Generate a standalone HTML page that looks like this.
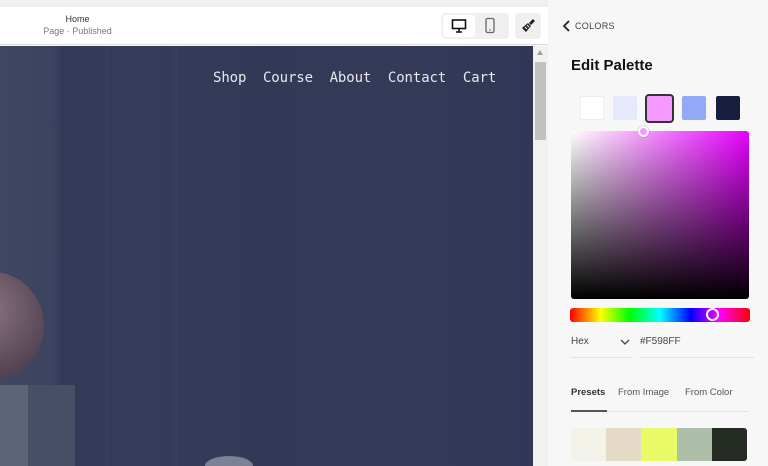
<!DOCTYPE html>
<html><head><meta charset="utf-8"><style>
*{margin:0;padding:0;box-sizing:border-box}
html,body{width:768px;height:466px;overflow:hidden}
body{background:#f7f7f7;font-family:"Liberation Sans",sans-serif;position:relative}
.abs{position:absolute}
</style></head><body>
<div class="abs" style="left:0;top:0;width:548px;height:7px;background:#efefef"></div>
<div class="abs" style="left:0;top:7px;width:548px;height:38px;background:#fff;border-bottom:1px solid #ddd"></div>
<div class="abs" style="left:0;top:14px;width:155px;text-align:center;font-size:9px;color:#333">Home</div>
<div class="abs" style="left:0;top:26px;width:155px;text-align:center;font-size:9px;color:#777">Page · Published</div>
<div class="abs" style="left:441px;top:13px;width:68px;height:26px;background:#f0f0f0;border-radius:4px"></div>
<div class="abs" style="left:443px;top:15px;width:32px;height:22px;background:#fff;border-radius:3px"></div>
<svg class="abs" style="left:451px;top:18px" width="16" height="16" viewBox="0 0 16 16"><rect x="1.5" y="2" width="13" height="8.5" fill="none" stroke="#111" stroke-width="1.6"/><path d="M8 10.5v3M5 14h6" stroke="#111" stroke-width="1.6"/></svg>
<svg class="abs" style="left:484px;top:17px" width="12" height="17" viewBox="0 0 12 17"><rect x="2" y="1.5" width="8" height="14" rx="1.5" fill="none" stroke="#666" stroke-width="1.3"/><path d="M5 13h2" stroke="#666"/></svg>
<div class="abs" style="left:515px;top:13px;width:26px;height:26px;background:#f0f0f0;border-radius:4px"></div>
<svg class="abs" style="left:519px;top:17px" width="18" height="18" viewBox="0 0 18 18"><path d="M14 2l2 2-4 4-2-2z" fill="#222"/><path d="M9 6l3 3-5 6-4-4z" fill="#222"/><path d="M6 10l2 2M8 8l2 2" stroke="#fff" stroke-width="1"/></svg>
<div class="abs" style="left:0;top:46px;width:533px;height:420px;overflow:hidden;background:linear-gradient(90deg,#3f4762 0%,#3b4360 10%,#333a57 12%,#353c5a 25%,#323957 50%,#343b58 70%,#313856 100%)">
<div class="abs" style="left:105px;top:0;width:4px;height:420px;background:rgba(255,255,255,.025)"></div>
<div class="abs" style="left:172px;top:0;width:6px;height:420px;background:rgba(255,255,255,.02)"></div>
<div class="abs" style="left:-60px;top:226px;width:104px;height:108px;border-radius:50%;background:radial-gradient(circle at 45% 35%,#8a7580,#5e4c5a 60%,#3e3646)"></div>
<div class="abs" style="left:0;top:339px;width:28px;height:81px;background:#5d6478"></div>
<div class="abs" style="left:28px;top:339px;width:47px;height:81px;background:#474e66"></div>
<div class="abs" style="left:205px;top:410px;width:48px;height:20px;border-radius:50%;background:#7c8196"></div>
<div class="abs" style="left:213px;top:24px;font-family:'DejaVu Sans Mono','Liberation Mono',monospace;font-size:14px;letter-spacing:-0.1px;color:#e8e8ee;white-space:nowrap">Shop&nbsp;&nbsp;Course&nbsp;&nbsp;About&nbsp;&nbsp;Contact&nbsp;&nbsp;Cart</div>
</div>
<div class="abs" style="left:533px;top:46px;width:15px;height:420px;background:#f1f1f1"></div>
<div class="abs" style="left:535px;top:62px;width:11px;height:78px;background:#c1c1c1"></div>
<div class="abs" style="left:537px;top:50px;width:0;height:0;border-left:3.5px solid transparent;border-right:3.5px solid transparent;border-bottom:5px solid #a0a0a0"></div>
<svg class="abs" style="left:562px;top:20px" width="10" height="12" viewBox="0 0 10 12"><path d="M7 1L2 6l5 5" fill="none" stroke="#222" stroke-width="1.8"/></svg>
<div class="abs" style="left:575px;top:21px;font-size:9px;color:#444;letter-spacing:.3px">COLORS</div>
<div class="abs" style="left:571px;top:57px;font-size:15px;font-weight:bold;color:#111">Edit Palette</div>
<div class="abs" style="left:580px;top:96px;width:24px;height:24px;background:#fff;border-radius:2px;border:1px solid #eee"></div>
<div class="abs" style="left:613px;top:96px;width:24px;height:24px;background:#e6e9fb;border-radius:2px"></div>
<div class="abs" style="left:645px;top:94px;width:29px;height:29px;border:2px solid #333;border-radius:4px;background:#f598ff"></div>
<div class="abs" style="left:682px;top:96px;width:24px;height:24px;background:#93a8f7;border-radius:2px"></div>
<div class="abs" style="left:716px;top:96px;width:24px;height:24px;background:#181e3e;border-radius:2px"></div>
<div class="abs" style="left:571px;top:131px;width:178px;height:168px;border-radius:3px;background:linear-gradient(to top,#000,rgba(0,0,0,0)),linear-gradient(to right,#fff,#e600ff)"></div>
<div class="abs" style="left:638px;top:126px;width:11px;height:11px;border-radius:50%;border:2px solid #fff;background:#f598ff;box-shadow:0 0 1px #666"></div>
<div class="abs" style="left:570px;top:308px;width:180px;height:14px;border-radius:3px;background:linear-gradient(to right,#f00,#ff0 17%,#0f0 33%,#0ff 50%,#00f 67%,#f0f 83%,#f00)"></div>
<div class="abs" style="left:706px;top:308px;width:13px;height:13px;border-radius:50%;border:2.5px solid #fff"></div>
<div class="abs" style="left:571px;top:336px;font-size:10px;color:#444">Hex</div>
<svg class="abs" style="left:620px;top:338px" width="10" height="8"><path d="M1 2l4 4 4-4" fill="none" stroke="#444" stroke-width="1.3"/></svg>
<div class="abs" style="left:571px;top:357px;width:61px;height:1px;background:#e2e2e2"></div>
<div class="abs" style="left:640px;top:336px;font-size:10px;color:#444">#F598FF</div>
<div class="abs" style="left:640px;top:357px;width:114px;height:1px;background:#e2e2e2"></div>
<div class="abs" style="left:571px;top:387px;font-size:9.5px;font-weight:bold;color:#333">Presets</div>
<div class="abs" style="left:618px;top:387px;font-size:9.5px;color:#555">From Image</div>
<div class="abs" style="left:685px;top:387px;font-size:9.5px;color:#555">From Color</div>
<div class="abs" style="left:571px;top:411px;width:177px;height:1px;background:#e2e2e2"></div>
<div class="abs" style="left:571px;top:410px;width:36px;height:2px;background:#555"></div>
<div class="abs" style="left:571px;top:428px;width:176px;height:33px;border-radius:3px;overflow:hidden;display:flex">
<div style="flex:1;background:#f3f3ea"></div><div style="flex:1;background:#e5dac5"></div><div style="flex:1;background:#e8fb66"></div><div style="flex:1;background:#adbfa9"></div><div style="flex:1;background:#232b22"></div></div>
</body></html>
